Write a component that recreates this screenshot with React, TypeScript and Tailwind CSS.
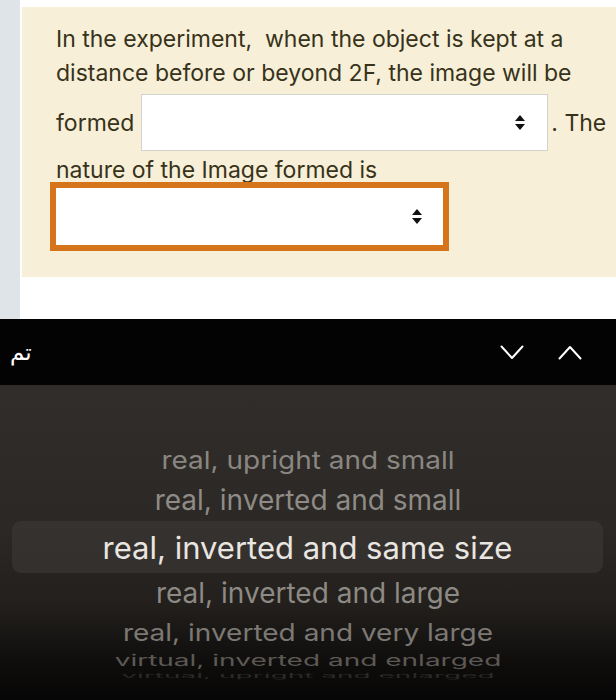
import React from 'react';

function SelectArrows() {
  return (
    <svg width="10" height="15" viewBox="0 0 10 15" className="shrink-0">
      <polygon points="0,6 5,0 10,6" fill="#111" />
      <polygon points="0,9 10,9 5,15" fill="#111" />
    </svg>
  );
}

function Chevron({ up }: { up?: boolean }) {
  return (
    <svg width="24" height="15" viewBox="0 0 24 15" fill="none">
      <polyline
        points={up ? '1.5,13.5 12,2 22.5,13.5' : '1.5,1.5 12,13 22.5,1.5'}
        stroke="#fff"
        strokeWidth="2"
        strokeLinecap="round"
        strokeLinejoin="round"
      />
    </svg>
  );
}

const options = [
  { label: 'real, upright and small', h: 'h-[38px]', text: 'text-[#8a8681] scale-y-[0.88]' },
  { label: 'real, inverted and small', h: 'h-[42px]', text: 'text-[#8f8b86]' },
  { label: 'real, inverted and same size', h: 'h-[52px]', text: 'text-[#e9e5e0] text-[31px]', selected: true },
  { label: 'real, inverted and large', h: 'h-[40px]', text: 'text-[#8d8984]' },
  { label: 'real, inverted and very large', h: 'h-[39px]', text: 'text-[#7c7873] scale-y-[0.85]' },
  { label: 'virtual, inverted and enlarged', h: 'h-[18px]', text: 'text-[#5c5854] scale-y-[0.55]' },
  { label: 'virtual, upright and enlarged', h: 'h-[12px]', text: 'text-[#2c2927] scale-y-[0.22]' },
];

export default function App() {
  return (
    <div className="w-[616px] h-[700px] overflow-hidden flex flex-col bg-white">
      {/* page content */}
      <div className="h-[319px] flex shrink-0">
        <div className="w-[20px] bg-[#dfe4e8]" />
        <div className="flex-1 pt-[7px] pl-[2px]">
          <div className="h-[270px] bg-[#f7efd8] pl-[34px] pt-[15px] text-[23px] text-[#37331a] font-['Inter',sans-serif]">
            <div className="h-[34px] leading-[34px] whitespace-pre">In the experiment,  when the object is kept at a</div>
            <div className="h-[34px] leading-[34px]">distance before or beyond 2F, the image will be</div>
            <div className="mt-[4px] h-[57px] flex items-center leading-[34px]">
              <span>formed</span>
              <div className="ml-[7px] w-[407px] h-[57px] bg-white border border-[#d4d2cc] flex items-center justify-end pr-[22px] shrink-0">
                <SelectArrows />
              </div>
              <span className="ml-[3px] whitespace-nowrap">. The</span>
            </div>
            <div className="mt-[2px] h-[34px] leading-[34px]">nature of the Image formed is</div>
            <div className="mt-[1px] w-[387px] h-[57px] bg-white outline-[6px] outline-solid outline-[#d5741b] flex items-center justify-end pr-[21px]">
              <SelectArrows />
            </div>
          </div>
        </div>
      </div>

      {/* keyboard toolbar */}
      <div className="h-[66px] bg-[#030303] flex items-center justify-between pl-[10px] pr-[34px] shrink-0">
        <span dir="rtl" className="text-white text-[23px] font-['DejaVu_Sans',sans-serif] leading-none">تم</span>
        <div className="flex items-center gap-[34px]">
          <Chevron />
          <Chevron up />
        </div>
      </div>

      {/* wheel picker */}
      <div className="flex-1 flex flex-col pt-[56px] bg-[linear-gradient(to_bottom,#302d2a_0%,#2b2825_45%,#221f1c_70%,#0d0c0b_90%,#070606_100%)] font-['Inter',sans-serif] text-[28px]">
        {options.map((o) => (
          <div
            key={o.label}
            className={
              o.selected
                ? `${o.h} mx-[12px] mr-[13px] rounded-[9px] bg-[#3a3633]/70 flex items-center justify-center shrink-0`
                : `${o.h} flex items-center justify-center shrink-0`
            }
          >
            <span className={`${o.text} leading-none whitespace-nowrap inline-block`}>{o.label}</span>
          </div>
        ))}
      </div>
    </div>
  );
}
